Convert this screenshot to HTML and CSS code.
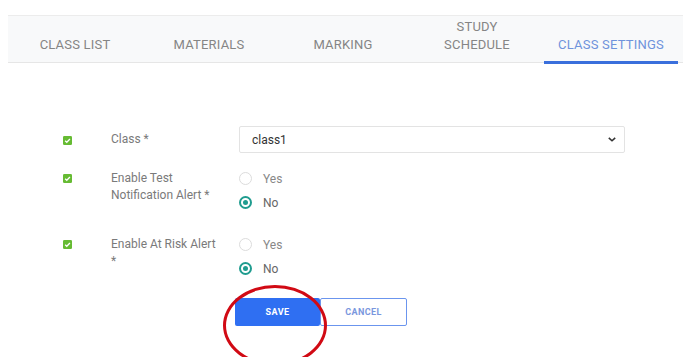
FILE: index.html
```html
<!DOCTYPE html>
<html>
<head>
<meta charset="utf-8">
<link rel="stylesheet" href="styles.css">
</head>
<body>
<div class="page">
  <nav class="tabs">
    <div class="tab">CLASS LIST</div>
    <div class="tab">MATERIALS</div>
    <div class="tab">MARKING</div>
    <div class="tab">STUDY<br>SCHEDULE</div>
    <div class="tab active">CLASS SETTINGS</div>
  </nav>

  <form class="form">
    <div class="row row-class">
      <span class="check"><svg viewBox="0 0 10 10" width="9" height="9"><rect width="10" height="10" rx="1.5" fill="#66bb33"/><path d="M2.4 5.2 L4.2 7 L7.7 3.3" fill="none" stroke="#fff" stroke-width="1.4"/></svg></span>
      <span class="label">Class *</span>
      <div class="select">
        <span>class1</span>
        <svg class="chev" viewBox="0 0 10 6" width="8" height="5"><path d="M1 1 L5 4.6 L9 1" fill="none" stroke="#333" stroke-width="2"/></svg>
      </div>
    </div>

    <div class="row row-test">
      <span class="check"><svg viewBox="0 0 10 10" width="9" height="9"><rect width="10" height="10" rx="1.5" fill="#66bb33"/><path d="M2.4 5.2 L4.2 7 L7.7 3.3" fill="none" stroke="#fff" stroke-width="1.4"/></svg></span>
      <span class="label">Enable Test<br>Notification Alert *</span>
      <div class="radios">
        <label class="radio"><span class="dot"></span>Yes</label>
        <label class="radio on"><span class="dot"></span>No</label>
      </div>
    </div>

    <div class="row row-risk">
      <span class="check"><svg viewBox="0 0 10 10" width="9" height="9"><rect width="10" height="10" rx="1.5" fill="#66bb33"/><path d="M2.4 5.2 L4.2 7 L7.7 3.3" fill="none" stroke="#fff" stroke-width="1.4"/></svg></span>
      <span class="label">Enable At Risk Alert<br>*</span>
      <div class="radios">
        <label class="radio"><span class="dot"></span>Yes</label>
        <label class="radio on"><span class="dot"></span>No</label>
      </div>
    </div>

    <div class="actions">
      <button type="button" class="btn save">SAVE</button>
      <button type="button" class="btn cancel">CANCEL</button>
    </div>
  </form>

  <div class="circle"></div>
</div>
</body>
</html>
```

FILE: styles.css
```css
* { box-sizing: border-box; }
html, body { margin: 0; padding: 0; background: #fff; }
body { font-family: Roboto, "Liberation Sans", sans-serif; width: 691px; height: 357px; overflow: hidden; }
.page { position: relative; height: 357px; }

.tabs {
  margin: 15px 0 0 8px;
  width: 675px;
  height: 48px;
  background: #f8f9fa;
  border-top: 1px solid #ececec;
  border-bottom: 1px solid #e6e6e6;
  display: flex;
  align-items: stretch;
}
.tab {
  width: 134px;
  display: flex;
  align-items: flex-end;
  justify-content: center;
  text-align: center;
  font-size: 13px;
  line-height: 18px;
  color: #858585;
  letter-spacing: 0.2px;
  padding-bottom: 8px;
}
.tab.active {
  color: #6f93dc;
  border-bottom: 3px solid #3a6fdc;
  margin-bottom: -2px;
  padding-bottom: 7px;
}

.form { margin: 63px 0 0 0; }
.row { display: flex; }
.check { width: 111px; padding-left: 63px; display: flex; }
.label { width: 128px; font-size: 12px; line-height: 17px; color: #7a7a7a; }

.row-class { height: 27px; align-items: center; }
.row-class .check { align-items: center; padding-top: 1px; }
.select {
  width: 386px;
  height: 27px;
  border: 1px solid #e3e3e3;
  border-radius: 2px;
  display: flex;
  align-items: center;
  justify-content: space-between;
  padding: 0 8px 0 12px;
  font-size: 12px;
  color: #333;
}

.row-test { margin-top: 17px; }
.row-risk { margin-top: 25px; }
.row-test .check, .row-risk .check { padding-top: 4px; }

.radios { display: flex; flex-direction: column; gap: 7px; }
.radio { display: flex; align-items: center; font-size: 12px; color: #888; height: 17px; }
.radio.on { color: #666; }
.dot {
  width: 13px; height: 13px;
  border-radius: 50%;
  border: 1px solid #dcdcdc;
  margin-right: 11px;
  position: relative;
}
.radio.on .dot { border: 2px solid #1f9c8f; }
.radio.on .dot::after {
  content: "";
  position: absolute;
  left: 2px; top: 2px;
  width: 5px; height: 5px;
  border-radius: 50%;
  background: #1f9c8f;
}

.actions { display: flex; margin: 21px 0 0 235px; }
.btn {
  height: 28px;
  font-family: Roboto, "Liberation Sans", sans-serif;
  font-size: 9px;
  font-weight: 700;
  letter-spacing: 0.4px;
  border-radius: 2px;
  cursor: pointer;
}
.save { width: 85px; background: #2f6ff2; color: #fff; border: none; }
.cancel { width: 87px; background: #fff; color: #7a97de; border: 1.5px solid #6b95ee; }

.circle {
  position: absolute;
  left: 223px;
  top: 270px;
  width: 104px;
  height: 81px;
  border: 3px solid #d10a14;
  border-radius: 50%;
}
```
